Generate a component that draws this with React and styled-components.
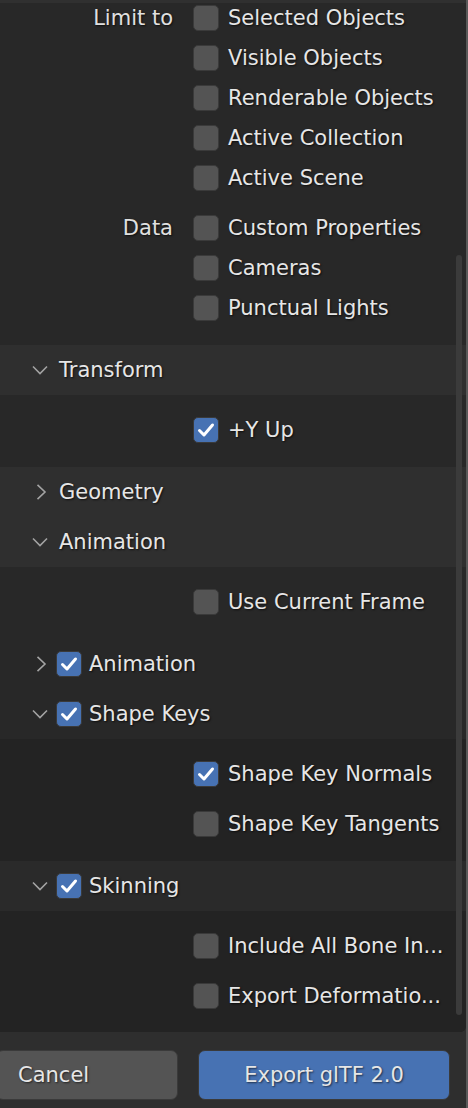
import React from 'react';
import styled, { createGlobalStyle } from 'styled-components';

const GlobalStyle = createGlobalStyle`
  html, body {
    margin: 0;
    padding: 0;
    background: #2e2e2e;
  }
  * {
    box-sizing: border-box;
  }
`;

const limitTo = [
  'Selected Objects',
  'Visible Objects',
  'Renderable Objects',
  'Active Collection',
  'Active Scene',
];

const dataItems = ['Custom Properties', 'Cameras', 'Punctual Lights'];

const Chevron = ({ open }) => (
  <ChevronBox>
    <svg width="16" height="16" viewBox="0 0 16 16" fill="none">
      {open ? (
        <path d="M1 4.5 L8 11.5 L15 4.5" stroke="#a3a3a3" strokeWidth="1.6" />
      ) : (
        <path d="M5.5 0.8 L13 8 L5.5 15.2" stroke="#a3a3a3" strokeWidth="1.6" />
      )}
    </svg>
  </ChevronBox>
);

const CheckBox = ({ checked }) => (
  <Box $checked={checked}>
    {checked && (
      <svg width="18" height="18" viewBox="0 0 18 18" fill="none">
        <path
          d="M2.5 9.5 L7 14 L15.5 4"
          stroke="#ffffff"
          strokeWidth="3"
          strokeLinecap="round"
          strokeLinejoin="round"
        />
      </svg>
    )}
  </Box>
);

const PropRow = ({ label, text, checked }) => (
  <Row>
    <Label>{label}</Label>
    <CheckBox checked={checked} />
    <ItemText>{text}</ItemText>
  </Row>
);

const Header = ({ open, title, checked, tone, withCheck }) => (
  <HeaderBar $tone={tone}>
    <Chevron open={open} />
    {withCheck && (
      <HeaderCheck>
        <CheckBox checked={checked} />
      </HeaderCheck>
    )}
    <HeaderText $withCheck={withCheck}>{title}</HeaderText>
  </HeaderBar>
);

const App = () => {
  return (
    <Window>
      <GlobalStyle />
      <TopStrip />
      <Scroller>
        <Body $tone="panel" $top={-5} $bottom={17}>
          <Group>
            {limitTo.map((t, i) => (
              <PropRow key={t} label={i === 0 ? 'Limit to' : ''} text={t} />
            ))}
          </Group>
          <Group>
            {dataItems.map((t, i) => (
              <PropRow key={t} label={i === 0 ? 'Data' : ''} text={t} />
            ))}
          </Group>
        </Body>

        <Header open title="Transform" tone="header" />
        <Body $tone="panel" $top={15} $bottom={17}>
          <PropRow text="+Y Up" checked />
        </Body>

        <Header title="Geometry" tone="header" />
        <Header open title="Animation" tone="header" />
        <Body $tone="panel" $top={15} $bottom={17}>
          <PropRow text="Use Current Frame" />
        </Body>

        <Header title="Animation" tone="panel" withCheck checked />
        <Header open title="Shape Keys" tone="panel" withCheck checked />
        <Body $tone="sub" $top={15} $bottom={17}>
          <PropRow text="Shape Key Normals" checked />
          <PropRow text="Shape Key Tangents" />
        </Body>

        <Header open title="Skinning" tone="subHeader" withCheck checked />
        <Body $tone="sub" $top={15} $bottom={16}>
          <PropRow text="Include All Bone In..." />
          <PropRow text="Export Deformatio..." />
        </Body>

        <ScrollThumb />
      </Scroller>

      <Footer>
        <CancelButton>Cancel</CancelButton>
        <ExportButton>Export glTF 2.0</ExportButton>
      </Footer>
    </Window>
  );
};

const tones = {
  panel: '#282828',
  header: '#2f2f2f',
  sub: '#232323',
  subHeader: '#2a2a2a',
};

const Window = styled.div`
  width: 468px;
  height: 1108px;
  display: flex;
  flex-direction: column;
  overflow: hidden;
  background: #2e2e2e;
  border-right: 2px solid #595959;
  font-family: 'DejaVu Sans', 'Liberation Sans', sans-serif;
  font-size: 21px;
  color: #e6e6e6;
`;

const TopStrip = styled.div`
  height: 3px;
  flex: none;
  background: #303030;
`;

const Scroller = styled.div`
  position: relative;
  height: 1029px;
  flex: none;
  overflow: hidden;
  background: #232323;
  border-bottom-right-radius: 6px;
`;

const Body = styled.div`
  background: ${(p) => tones[p.$tone]};
  padding-top: ${(p) => Math.max(p.$top, 0)}px;
  margin-top: ${(p) => Math.min(p.$top, 0)}px;
  padding-bottom: ${(p) => p.$bottom}px;
  display: flex;
  flex-direction: column;
  gap: 10px;
`;

const Group = styled.div`
  display: flex;
  flex-direction: column;
`;

const Row = styled.div`
  height: 40px;
  display: flex;
  align-items: center;
`;

const Label = styled.div`
  width: 193px;
  flex: none;
  padding-right: 20px;
  text-align: right;
  color: #e0e0e0;
  text-shadow: 1px 1px 2px rgba(0, 0, 0, 0.7);
  white-space: nowrap;
`;

const Box = styled.div`
  width: 26px;
  height: 26px;
  flex: none;
  border-radius: 5px;
  border: 1px solid #3a3a3a;
  background: ${(p) => (p.$checked ? '#4772b3' : '#545454')};
  display: flex;
  align-items: center;
  justify-content: center;
`;

const ItemText = styled.div`
  margin-left: 9px;
  white-space: nowrap;
  text-shadow: 1px 1px 2px rgba(0, 0, 0, 0.7);
`;

const HeaderBar = styled.div`
  height: 50px;
  display: flex;
  align-items: center;
  padding-left: 32px;
  background: ${(p) => tones[p.$tone]};
`;

const ChevronBox = styled.div`
  width: 16px;
  height: 16px;
  flex: none;
  display: flex;
`;

const HeaderCheck = styled.div`
  margin-left: 8px;
  display: flex;
`;

const HeaderText = styled.div`
  margin-left: ${(p) => (p.$withCheck ? 7 : 11)}px;
  white-space: nowrap;
  text-shadow: 1px 1px 2px rgba(0, 0, 0, 0.7);
`;

const ScrollThumb = styled.div`
  position: absolute;
  left: 456px;
  top: 252px;
  width: 6px;
  height: 760px;
  border-radius: 3px;
  background: #3b3b3b;
`;

const Footer = styled.div`
  flex: 1;
  display: flex;
  align-items: flex-start;
  padding-top: 18px;
  gap: 20px;
  margin-left: -4px;
`;

const ButtonBase = styled.div`
  height: 50px;
  border-radius: 7px;
  border: 1px solid #3a3a3a;
  display: flex;
  align-items: center;
  text-shadow: 1px 1px 2px rgba(0, 0, 0, 0.6);
`;

const CancelButton = styled(ButtonBase)`
  width: 182px;
  padding-left: 21px;
  background: #545454;
`;

const ExportButton = styled(ButtonBase)`
  width: 252px;
  justify-content: center;
  background: #4772b3;
`;

export default App;
